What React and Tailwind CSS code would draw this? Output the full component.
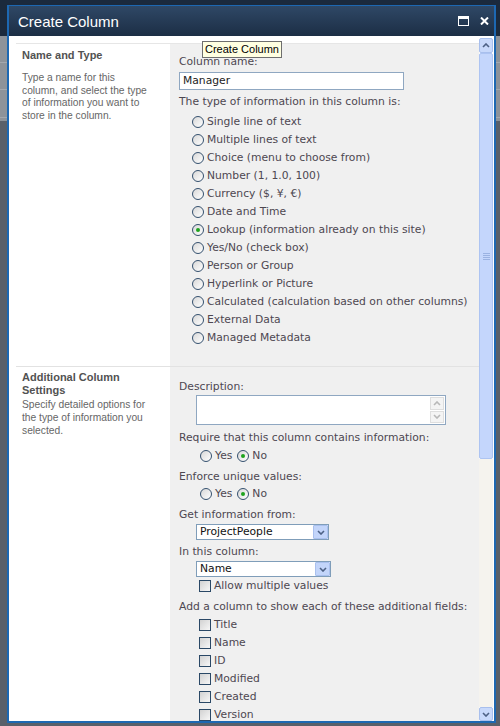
import React from 'react';

const types = [
  'Single line of text',
  'Multiple lines of text',
  'Choice (menu to choose from)',
  'Number (1, 1.0, 100)',
  'Currency ($, ¥, €)',
  'Date and Time',
  'Lookup (information already on this site)',
  'Yes/No (check box)',
  'Person or Group',
  'Hyperlink or Picture',
  'Calculated (calculation based on other columns)',
  'External Data',
  'Managed Metadata',
];

const fields = ['Title', 'Name', 'ID', 'Modified', 'Created', 'Version'];

// little radio button, SharePoint 2010 / IE look
const Radio = ({ checked }) => (
  <span className="w-[12px] h-[12px] shrink-0 rounded-full border border-[#34506e] bg-linear-to-br from-[#d8d8d8] to-white flex items-center justify-center">
    {checked && <span className="w-[4px] h-[4px] rounded-full bg-[#1ea31e]" />}
  </span>
);

const Check = () => (
  <span className="w-[12px] h-[12px] shrink-0 border border-[#2a4866] bg-linear-to-br from-[#d2d2d2] to-[#f7f7f7]" />
);

const ChevronDown = ({ color = '#4d6185' }) => (
  <svg width="8" height="5" viewBox="0 0 8 5">
    <path d="M1 1 L4 4 L7 1" fill="none" stroke={color} strokeWidth="1.6" />
  </svg>
);

const ChevronUp = ({ color = '#4d6185' }) => (
  <svg width="8" height="5" viewBox="0 0 8 5">
    <path d="M1 4 L4 1 L7 4" fill="none" stroke={color} strokeWidth="1.6" />
  </svg>
);

const Select = ({ value, width }) => (
  <div className={`ml-[17px] mt-[2px] h-[16px] border border-[#7f9db9] bg-white flex ${width}`}>
    <span className="flex-1 pl-[3px] leading-[14px] text-[#111]">{value}</span>
    <span className="w-[15px] bg-[#c3d5fa] border border-[#a9c0ee] rounded-[1px] flex items-center justify-center">
      <ChevronDown />
    </span>
  </div>
);

const YesNo = () => (
  <div className="ml-[21px] h-[18px] flex items-center">
    <Radio />
    <span className="ml-[3px]">Yes</span>
    <span className="ml-[5px]"><Radio checked /></span>
    <span className="ml-[3px]">No</span>
  </div>
);

export default function App() {
  return (
    <div className="relative w-[500px] h-[726px] overflow-hidden bg-[#59606a] font-['DejaVu_Sans',Verdana,sans-serif] text-[10.75px]">
      {/* dimmed page behind the dialog */}
      <div className="h-[36px] bg-[#1b2a3d]" />
      <div className="h-[85px] bg-[#8d939a] flex flex-col">
        <div className="h-[27px] border-b border-[#a3a8ae]" />
        <div className="h-[27px] border-b border-[#a3a8ae]" />
        <div className="h-[28px] border-b border-[#a3a8ae]" />
      </div>

      {/* dialog */}
      <div className="absolute left-[7px] top-[5px] w-[489px] h-[718px] flex flex-col border-2 border-t border-[#1d68b2] bg-white">
        <div className="h-[30px] shrink-0 bg-linear-to-b from-[#2f4866] to-[#1c2e45] flex items-center pl-[9px] pr-[5px]">
          <span className="flex-1 text-white text-[15px] font-['Liberation_Sans',Arial,sans-serif] leading-none">Create Column</span>
          <svg width="11" height="10" viewBox="0 0 11 10" className="mr-[11px]">
            <rect x="0.5" y="0.5" width="10" height="9" fill="none" stroke="#fff" strokeWidth="1" />
            <rect x="0" y="0" width="11" height="3" fill="#fff" />
          </svg>
          <svg width="9" height="8" viewBox="0 0 9 8">
            <path d="M1 0.5 L8 7.5 M8 0.5 L1 7.5" stroke="#fff" strokeWidth="2" />
          </svg>
        </div>

        <div className="flex-1 min-h-0 flex">
          <div className="flex-1 min-w-0 overflow-hidden pt-[7px] pl-[7px]">
            <div className="border-t border-[#e6e6e6]">
              {/* section 1 */}
              <div className="flex border-b border-[#e2e2e2]">
                <div className="w-[154px] shrink-0 pl-[6px] pt-[4px] font-['Liberation_Sans',Arial,sans-serif]">
                  <div className="font-bold text-[11px] text-[#525252] leading-[14px]">Name and Type</div>
                  <p className="mt-[10px] w-[128px] text-[10.25px] text-[#666] leading-[12.5px]">
                    Type a name for this column, and select the type of information you want to store in the column.
                  </p>
                </div>
                <div className="flex-1 bg-[#f0f0f0] pl-[9px] pt-[11px] pb-[19px] text-[#4d4750]">
                  <div className="leading-[14px]">Column name:</div>
                  <div className="mt-[3px] w-[225px] h-[18px] border border-[#8fa7c1] bg-white pl-[3px] leading-[16px] text-[#222]">
                    Manager
                  </div>
                  <div className="mt-[5px] leading-[14px]">The type of information in this column is:</div>
                  <div className="mt-[4px] ml-[13px] flex flex-col">
                    {types.map((t, i) => (
                      <div key={t} className="h-[18px] flex items-center gap-[3px] whitespace-nowrap">
                        <Radio checked={i === 6} />
                        <span>{t}</span>
                      </div>
                    ))}
                  </div>
                </div>
              </div>

              {/* section 2 */}
              <div className="flex">
                <div className="w-[154px] shrink-0 pl-[6px] pt-[4px] font-['Liberation_Sans',Arial,sans-serif]">
                  <div className="w-[128px] font-bold text-[11px] text-[#525252] leading-[13.4px]">Additional Column Settings</div>
                  <p className="w-[128px] text-[10.25px] text-[#666] leading-[13px]">
                    Specify detailed options for the type of information you selected.
                  </p>
                </div>
                <div className="flex-1 bg-[#f0f0f0] pl-[9px] pt-[13px] pb-[20px] text-[#4d4750]">
                  <div className="leading-[14px]">Description:</div>
                  <div className="mt-[1px] ml-[17px] w-[250px] h-[30px] border border-[#8fa7c1] bg-white flex justify-end">
                    <div className="w-[16px] flex flex-col p-px gap-px">
                      <span className="flex-1 bg-[#f4f4f4] border border-[#dedede] flex items-center justify-center">
                        <ChevronUp color="#b8b8b8" />
                      </span>
                      <span className="flex-1 bg-[#f4f4f4] border border-[#dedede] flex items-center justify-center">
                        <ChevronDown color="#b8b8b8" />
                      </span>
                    </div>
                  </div>
                  <div className="mt-[6px] leading-[14px]">Require that this column contains information:</div>
                  <div className="mt-[2px]"><YesNo /></div>
                  <div className="mt-[5px] leading-[14px]">Enforce unique values:</div>
                  <div className="mt-[1px]"><YesNo /></div>
                  <div className="mt-[5px] leading-[14px]">Get information from:</div>
                  <Select value="ProjectPeople" width="w-[133px]" />
                  <div className="mt-[5px] leading-[14px]">In this column:</div>
                  <Select value="Name" width="w-[135px]" />
                  <div className="ml-[20px] h-[18px] flex items-center gap-[3px]">
                    <Check />
                    <span>Allow multiple values</span>
                  </div>
                  <div className="mt-[5px] leading-[14px] whitespace-nowrap">Add a column to show each of these additional fields:</div>
                  <div className="mt-[2px] ml-[20px] flex flex-col">
                    {fields.map((f) => (
                      <div key={f} className="h-[18px] flex items-center gap-[3px]">
                        <Check />
                        <span>{f}</span>
                      </div>
                    ))}
                  </div>
                </div>
              </div>
            </div>
          </div>

          {/* scroll bar */}
          <div className="w-[15px] shrink-0 pr-px pt-[2px] bg-white flex flex-col">
            <div className="h-[15px] bg-[#c8d9fb] border border-[#a8bfed] rounded-[2px] flex items-center justify-center">
              <ChevronUp />
            </div>
            <div className="h-[406px] bg-[#c4d6fc] border border-[#adc4f2] rounded-[2px] flex flex-col items-center justify-center gap-px">
              <span className="w-[7px] h-px bg-[#9ab2e2]" />
              <span className="w-[7px] h-px bg-[#9ab2e2]" />
              <span className="w-[7px] h-px bg-[#9ab2e2]" />
              <span className="w-[7px] h-px bg-[#9ab2e2]" />
            </div>
            <div className="flex-1 bg-[#f5f3ee]" />
            <div className="h-[14px] bg-[#c8d9fb] border border-[#a8bfed] rounded-[2px] flex items-center justify-center">
              <ChevronDown />
            </div>
          </div>
        </div>
      </div>

      {/* tooltip */}
      <div className="absolute left-[202px] top-[41px] h-[17px] px-[2px] bg-[#ffffe1] border border-[#6e6e6e] font-['Liberation_Sans',Arial,sans-serif] text-[11px] leading-[15px] text-black">
        Create Column
      </div>
    </div>
  );
}
